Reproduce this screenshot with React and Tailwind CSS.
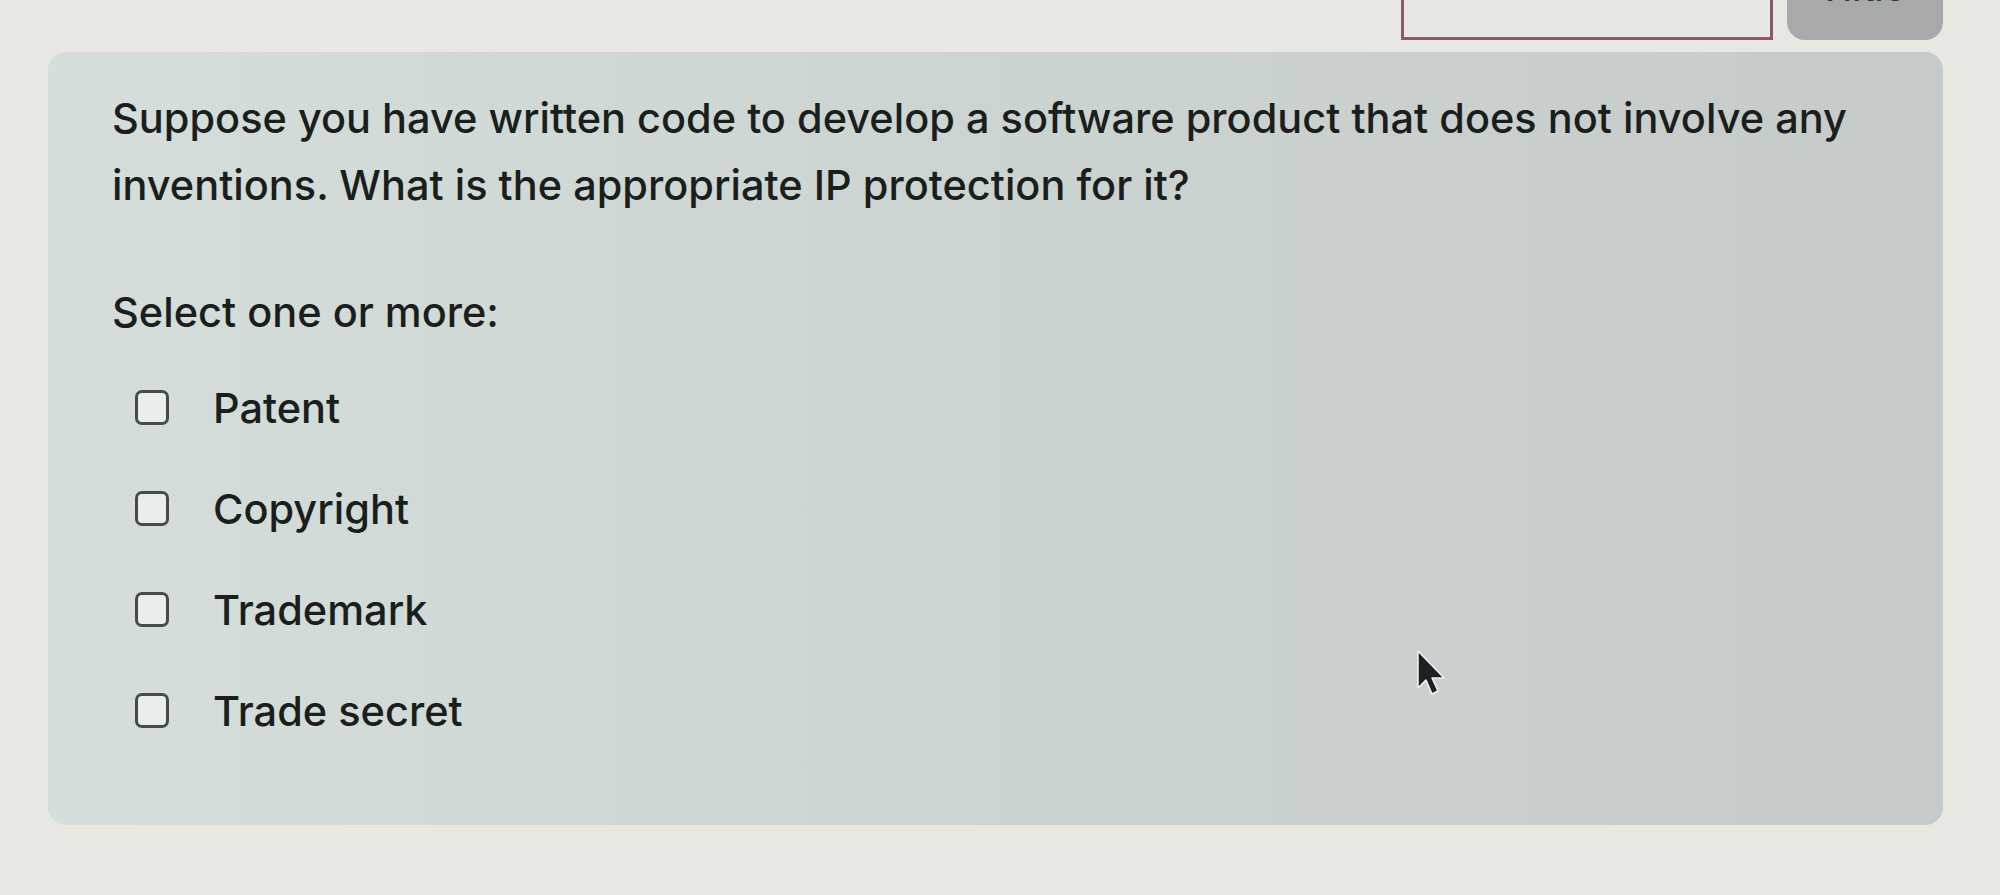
import React from 'react';

const options = ['Patent', 'Copyright', 'Trademark', 'Trade secret'];

const Cursor = () => (
	<svg width="34" height="50" viewBox="0 0 34 50" className="absolute left-[1414px] top-[648px]">
		<path
			d="M4 3 L4 40 L12 32 L18 46 L24 43 L18 30 L30 30 Z"
			fill="#1c1f24"
			stroke="#f4f4f4"
			strokeWidth="1.5"
			strokeLinejoin="round"
		/>
	</svg>
);

const App = () => {
	return (
		<div className="relative w-[2000px] h-[895px] overflow-hidden bg-[#e8e8e3] font-['Inter',sans-serif] font-medium text-[#1a1e1d]">
			{/* top bar, cut off by the top edge */}
			<div className="flex justify-end items-end gap-[14px] h-[80px] -mt-[40px] pr-[57px]">
				<div className="w-[372px] h-[76px] border-[3px] border-[#8e5862] bg-[#e6e6e2]" />
				<button className="w-[156px] h-[80px] rounded-[18px] bg-[#a7aaa9] text-[#2f3332] text-[36px] leading-[36px] pt-[10px] flex justify-center items-start">
					Hide
				</button>
			</div>

			<div className="ml-[48px] mt-[12px] w-[1895px] rounded-[18px] bg-gradient-to-r from-[#d5deda] via-[#ccd4d1] to-[#c5cbc9] pl-[64px] pr-[60px] pt-[33px] pb-[64px]">
				<p className="text-[41.5px] leading-[67px]">
					Suppose you have written code to develop a software product that does not involve any
					<br />
					inventions. What is the appropriate IP protection for it?
				</p>
				<p className="mt-[60px] text-[41.5px] leading-[67px]">Select one or more:</p>

				<div className="mt-[11px] flex flex-col pl-[23px]">
					{options.map((opt) => (
						<label key={opt} className="h-[101px] flex items-center gap-[44px]">
							<span className="w-[34px] h-[35px] rounded-[7px] border-[3px] border-[#474b4a] bg-[#e9edeb]" />
							<span className="text-[41.5px] leading-[48px]">{opt}</span>
						</label>
					))}
				</div>
			</div>

			<Cursor />
		</div>
	);
};

export default App;
